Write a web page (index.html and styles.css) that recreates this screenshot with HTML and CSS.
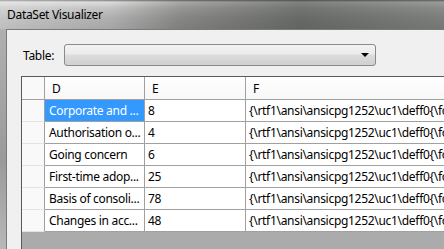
FILE: index.html
```html
<!DOCTYPE html>
<html lang="en">
<head>
  <meta charset="UTF-8">
  <title>DataSet Visualizer</title>
  <link rel="stylesheet" href="styles.css">
</head>
<body>

<div class="window">
  <div class="titlebar"><span class="title">DataSet Visualizer</span></div>
  <div class="frame">
    <div class="client">
      <div class="picker">
        <label for="tableSelect">Table:</label>
        <div class="combo" id="tableSelect"><span class="arrow"></span></div>
      </div>

      <div class="grid">
        <table>
          <thead>
            <tr>
              <th class="rowhead"></th>
              <th class="col-d">D</th>
              <th class="col-e">E</th>
              <th class="col-f">F</th>
            </tr>
          </thead>
          <tbody>
            <tr>
              <td class="rowhead"></td>
              <td class="selected">Corporate and ...</td>
              <td>8</td>
              <td>{\rtf1\ansi\ansicpg1252\uc1\deff0{\fo</td>
            </tr>
            <tr>
              <td class="rowhead"></td>
              <td>Authorisation o...</td>
              <td>4</td>
              <td>{\rtf1\ansi\ansicpg1252\uc1\deff0{\fo</td>
            </tr>
            <tr>
              <td class="rowhead"></td>
              <td>Going concern</td>
              <td>6</td>
              <td>{\rtf1\ansi\ansicpg1252\uc1\deff0{\fo</td>
            </tr>
            <tr>
              <td class="rowhead"></td>
              <td>First-time adop...</td>
              <td>25</td>
              <td>{\rtf1\ansi\ansicpg1252\uc1\deff0{\fo</td>
            </tr>
            <tr>
              <td class="rowhead"></td>
              <td>Basis of consoli...</td>
              <td>78</td>
              <td>{\rtf1\ansi\ansicpg1252\uc1\deff0{\fo</td>
            </tr>
            <tr>
              <td class="rowhead"></td>
              <td>Changes in acc...</td>
              <td>48</td>
              <td>{\rtf1\ansi\ansicpg1252\uc1\deff0{\fo</td>
            </tr>
          </tbody>
        </table>
      </div>
    </div>
  </div>
</div>

</body>
</html>
```

FILE: styles.css
```css
html, body { margin: 0; padding: 0; }
body { width: 444px; height: 249px; overflow: hidden; font-family: "Noto Sans", "Open Sans", sans-serif; font-size: 12px; letter-spacing: -0.3px; color: #000; }

.window { width: 444px; height: 249px; display: flex; flex-direction: column; }

.titlebar {
  height: 29px;
  flex: none;
  box-sizing: border-box;
  padding: 6px 0 0 7px;
  background:
    linear-gradient(90deg, rgba(255,255,255,0.35) 0, rgba(255,255,255,0.1) 110px, rgba(60,60,55,0.3) 180px, rgba(40,45,40,0.5) 300px, rgba(60,65,60,0.4) 444px),
    linear-gradient(180deg, #6c6c6c 0, #d8d8d8 2px, #bcbcbc 8px, #a6a6a6 18px, #9c9c9c 28px);
}
.title { font-size: 12px; color: #000; }

.frame {
  flex: 1;
  display: flex;
  padding-left: 6px;
  background: linear-gradient(180deg, #b0b0b0, #9a9a9a 60%, #b8b8b8);
}

.client {
  flex: 1;
  background: #f0f0f0;
  border-left: 1px solid #7a7a7a;
  border-top: 1px solid #7a7a7a;
  display: flex;
  flex-direction: column;
}

.picker { display: flex; align-items: center; padding: 14px 0 0 16px; height: 22px; }
.picker label { width: 41px; }
.combo {
  position: relative;
  width: 312px;
  height: 22px;
  box-sizing: border-box;
  border: 1px solid #8a8a8a;
  border-radius: 3px;
  background: linear-gradient(180deg, #f3f3f3 0, #ebebeb 45%, #dcdcdc 50%, #d0d0d0 100%);
}
.arrow {
  position: absolute;
  right: 6px;
  top: 8px;
  border-left: 4px solid transparent;
  border-right: 4px solid transparent;
  border-top: 4px solid #000;
}

.grid {
  margin: 10px 0 0 14px;
  flex: 1;
  border-left: 1px solid #5a5a5a;
  border-top: 1px solid #5a5a5a;
  background: #ababab;
  overflow: hidden;
}

table { border-collapse: separate; border-spacing: 0; table-layout: fixed; width: 430px; }
th, td {
  border-right: 1px solid #a0a0a0;
  border-bottom: 1px solid #a0a0a0;
  white-space: nowrap;
  overflow: hidden;
  text-align: left;
  font-weight: normal;
  background: #fff;
  padding: 0 0 0 3px;
  height: 21px;
}
th { height: 22px; padding-left: 7px; background: linear-gradient(180deg, #fff, #f7f7f8); }
th.rowhead, td.rowhead { width: 22px; padding: 0; background: #f9f9f9; border-bottom-color: #e4e4e4; }
th.rowhead { border-bottom-color: #a0a0a0; }
.col-d { width: 92px; }
.col-e { width: 93px; }
.col-f { width: 200px; }
td:nth-child(2) { padding-left: 4px; }
.selected { background: #3399ff; color: #fff; }
```
